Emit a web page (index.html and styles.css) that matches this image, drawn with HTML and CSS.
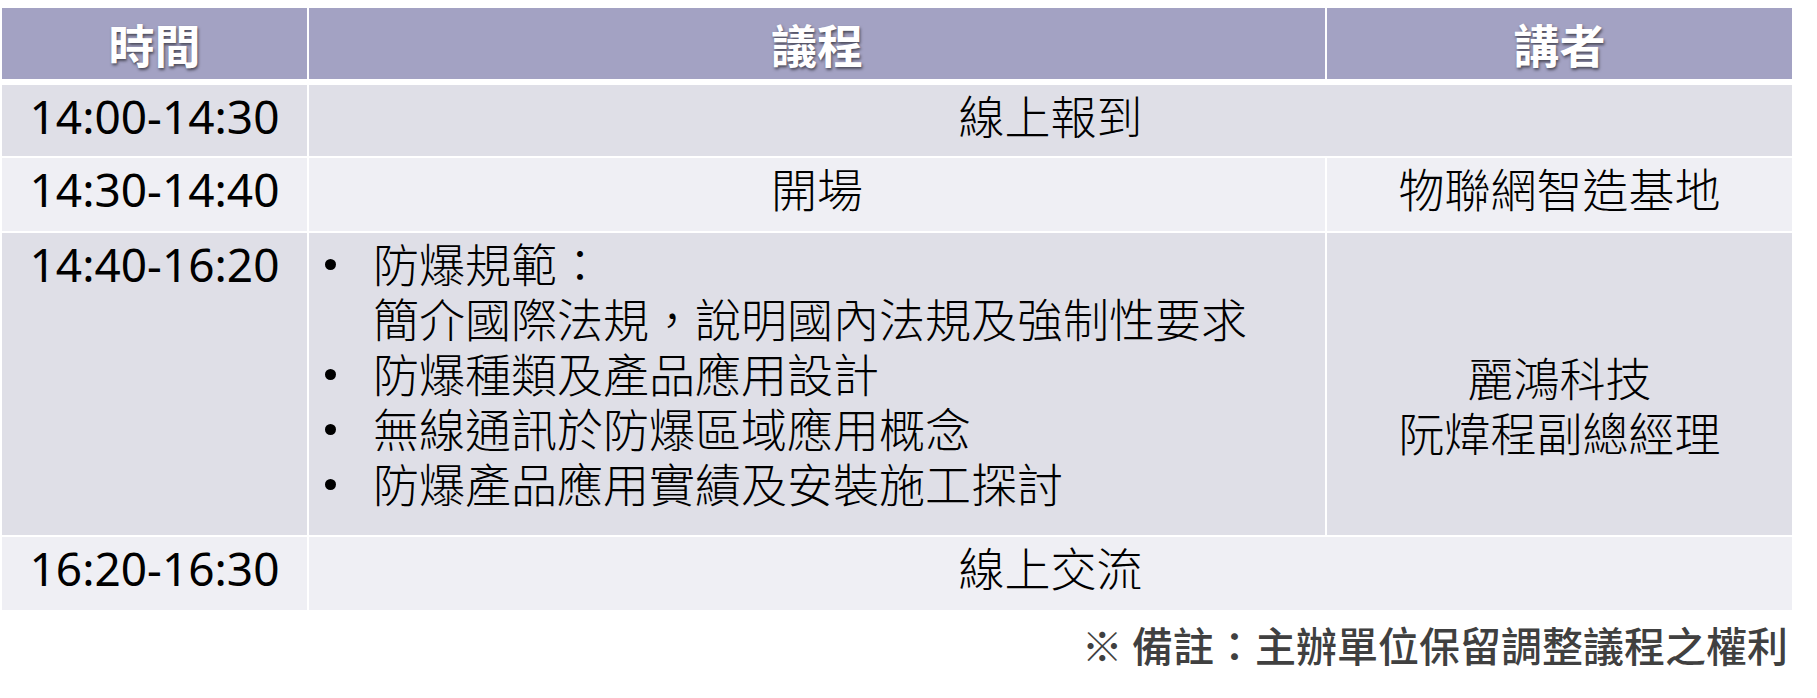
FILE: index.html
```html
<!DOCTYPE html>
<html lang="zh-Hant">
<head>
<meta charset="utf-8">
<title>議程表</title>
<link rel="stylesheet" href="styles.css">
</head>
<body>
<div class="page">
  <div class="schedule">
    <div class="cell head">時間</div>
    <div class="cell head">議程</div>
    <div class="cell head">講者</div>

    <div class="cell time band1">14:00-14:30</div>
    <div class="cell band1 center span2">線上報到</div>

    <div class="cell time band2">14:30-14:40</div>
    <div class="cell band2 center">開場</div>
    <div class="cell band2 center">物聯網智造基地</div>

    <div class="cell time band1">14:40-16:20</div>
    <div class="cell band1 agenda">
      <ul class="items">
        <li class="item"><span class="dot"></span><span class="item-text">防爆規範：<br>簡介國際法規，說明國內法規及強制性要求</span></li>
        <li class="item"><span class="dot"></span><span class="item-text">防爆種類及產品應用設計</span></li>
        <li class="item"><span class="dot"></span><span class="item-text">無線通訊於防爆區域應用概念</span></li>
        <li class="item"><span class="dot"></span><span class="item-text">防爆產品應用實績及安裝施工探討</span></li>
      </ul>
    </div>
    <div class="cell band1 speaker"><div>麗鴻科技</div><div>阮煒程副總經理</div></div>

    <div class="cell time band2">16:20-16:30</div>
    <div class="cell band2 center span2">線上交流</div>
  </div>
  <p class="note">※ 備註：主辦單位保留調整議程之權利</p>
</div>
</body>
</html>
```

FILE: styles.css
```css
html, body {
  margin: 0;
  padding: 0;
  background: #ffffff;
}

body {
  font-family: "Noto Sans", "Noto Sans CJK TC", sans-serif;
  color: #000000;
}

.page {
  width: 1790px;
  padding: 8px 0 0 2px;
}

.schedule {
  display: grid;
  grid-template-columns: 305px 1016px 465px;
  grid-template-rows: 75px 71px 73px 302px 73px;
  column-gap: 2px;
  row-gap: 2px;
  width: 1790px;
}

.cell {
  font-size: 46px;
  font-weight: 300;
  line-height: 55px;
  padding-top: 4px;
  box-sizing: border-box;
  white-space: nowrap;
}

.head {
  background: #a3a2c3;
  color: #ffffff;
  font-weight: 700;
  margin-bottom: 4px;
  padding-top: 0;
  display: flex;
  align-items: center;
  justify-content: center;
  text-shadow: 1px 2px 3px rgba(0, 0, 0, 0.55);
  font-family: "Noto Sans CJK TC", sans-serif;
}

.band1 {
  background: #dfdfe7;
}

.band2 {
  background: #efeff4;
}

.time {
  text-align: center;
  font-weight: 400;
}

.center {
  text-align: center;
}

.span2 {
  grid-column: span 2;
}

.agenda {
  padding-left: 16px;
}

.items {
  list-style: none;
  margin: 0;
  padding: 0;
}

.item {
  display: flex;
  align-items: flex-start;
}

.dot {
  flex: 0 0 48px;
  height: 55px;
  display: flex;
  align-items: center;
}

.dot::before {
  content: "";
  display: block;
  width: 11px;
  height: 11px;
  border-radius: 50%;
  background: #000000;
}

.speaker {
  display: flex;
  flex-direction: column;
  justify-content: center;
  align-items: center;
  padding-top: 44px;
}

.note {
  margin: 10px 0 0 0;
  padding-right: 4px;
  text-align: right;
  font-family: "Noto Sans CJK TC", sans-serif;
  font-weight: 500;
  font-size: 41px;
  line-height: 48px;
  color: #404040;
}
```
